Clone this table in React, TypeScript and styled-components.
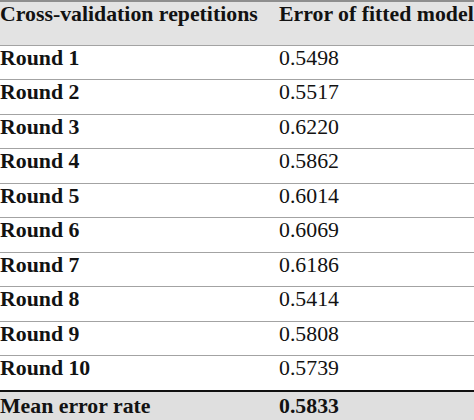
import React from 'react';
import styled, { createGlobalStyle } from 'styled-components';

const GlobalStyle = createGlobalStyle`
    html, body {
        margin: 0;
        padding: 0;
        background: #ffffff;
    }
    body {
        font-family: 'Liberation Serif', 'Times New Roman', serif;
        color: #121212;
        overflow: hidden;
    }
`;

const Table = styled.div`
    width: 474px;
    height: 420px;
    display: flex;
    flex-direction: column;
    overflow: hidden;
    font-size: 21.8px;
    line-height: 24.7px;
`;

const Row = styled.div<{ $variant?: 'head' | 'body' | 'foot' }>`
    display: grid;
    grid-template-columns: 279px 1fr;
    white-space: nowrap;
    box-sizing: border-box;
    flex: 0 0 auto;
    ${({ $variant = 'body' }) =>
        $variant === 'head'
            ? `
        height: 44.5px;
        border-top: 2px solid #8e8e8e;
        background: #e3e3e3;
    `
            : $variant === 'foot'
            ? `
        flex: 1 1 auto;
        border-top: 2.5px solid #111111;
        padding-top: 2px;
        background: #dfdfdf;
    `
            : `
        height: 34.5px;
        border-top: 1.5px solid #a3a3a3;
    `}
`;

const Cell = styled.div<{ $bold?: boolean }>`
    font-weight: ${({ $bold }) => ($bold ? 700 : 400)};
    overflow: visible;
`;

const rounds: Array<[string, string]> = [
    ['Round 1', '0.5498'],
    ['Round 2', '0.5517'],
    ['Round 3', '0.6220'],
    ['Round 4', '0.5862'],
    ['Round 5', '0.6014'],
    ['Round 6', '0.6069'],
    ['Round 7', '0.6186'],
    ['Round 8', '0.5414'],
    ['Round 9', '0.5808'],
    ['Round 10', '0.5739'],
];

const App = (): JSX.Element => (
    <>
        <GlobalStyle />
        <Table>
            <Row $variant="head">
                <Cell $bold>Cross-validation repetitions</Cell>
                <Cell $bold>Error of fitted model</Cell>
            </Row>
            {rounds.map(([label, value]) => (
                <Row key={label}>
                    <Cell $bold>{label}</Cell>
                    <Cell>{value}</Cell>
                </Row>
            ))}
            <Row $variant="foot">
                <Cell $bold>Mean error rate</Cell>
                <Cell $bold>0.5833</Cell>
            </Row>
        </Table>
    </>
);

export default App;
